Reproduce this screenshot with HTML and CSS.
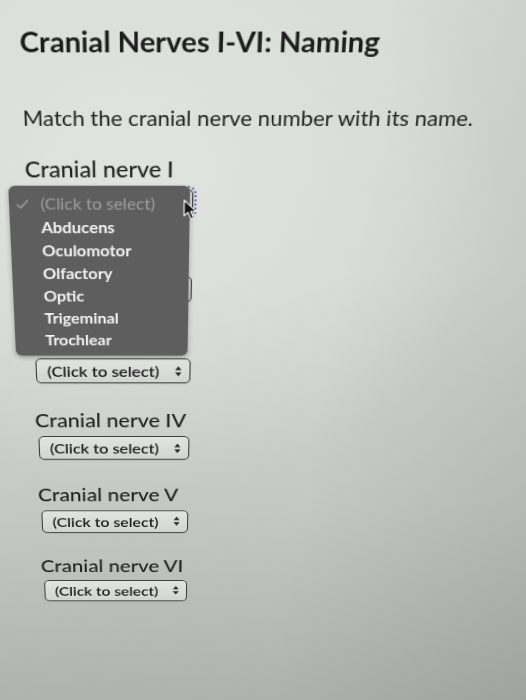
FILE: index.html
```
<!DOCTYPE html>
<html lang="en">
<head>
<meta charset="utf-8">
<title>Cranial Nerves I-VI: Naming</title>
<link rel="stylesheet" href="styles.css">
</head>
<body>
<main class="sheet">
  <h1 class="title">Cranial Nerves I-VI: Naming</h1>
  <p class="intro">Match the cranial nerve number with its name.</p>
  <div class="questions">
    <div class="q">
      <div class="label">Cranial nerve I</div>
      <div class="select focused">
        <span class="select-text">(Click to select)</span>
        <svg class="arrows" width="7" height="12" viewBox="0 0 8 14"><path d="M4 0.5 L7.5 5.5 L0.5 5.5 Z M4 13.5 L7.5 8.5 L0.5 8.5 Z" fill="#2a2a2a"/></svg>
        <ul class="menu">
          <li class="item checked"><svg class="check" width="12" height="10" viewBox="0 0 14 12"><path d="M1.5 6.5 L5 10 L12.5 1.5" fill="none" stroke="#9a9a9a" stroke-width="1.8" stroke-linecap="round" stroke-linejoin="round"/></svg>(Click to select)</li>
          <li class="item">Abducens</li>
          <li class="item">Oculomotor</li>
          <li class="item">Olfactory</li>
          <li class="item">Optic</li>
          <li class="item">Trigeminal</li>
          <li class="item">Trochlear</li>
        </ul>
        <svg class="cursor" width="13" height="21" viewBox="0 0 15 25"><path d="M1 1 L1 19 L5.2 15 L8.2 22.5 L11 21.3 L8.1 14 L13.8 14 Z" fill="#111" stroke="#fff" stroke-width="1.2" stroke-linejoin="round"/></svg>
      </div>
    </div>
    <div class="q">
      <div class="label">Cranial nerve II</div>
      <div class="select">
        <span class="select-text">(Click to select)</span>
        <svg class="arrows" width="7" height="12" viewBox="0 0 8 14"><path d="M4 0.5 L7.5 5.5 L0.5 5.5 Z M4 13.5 L7.5 8.5 L0.5 8.5 Z" fill="#2a2a2a"/></svg>
      </div>
    </div>
    <div class="q">
      <div class="label">Cranial nerve III</div>
      <div class="select">
        <span class="select-text">(Click to select)</span>
        <svg class="arrows" width="7" height="12" viewBox="0 0 8 14"><path d="M4 0.5 L7.5 5.5 L0.5 5.5 Z M4 13.5 L7.5 8.5 L0.5 8.5 Z" fill="#2a2a2a"/></svg>
      </div>
    </div>
    <div class="q">
      <div class="label">Cranial nerve IV</div>
      <div class="select">
        <span class="select-text">(Click to select)</span>
        <svg class="arrows" width="7" height="12" viewBox="0 0 8 14"><path d="M4 0.5 L7.5 5.5 L0.5 5.5 Z M4 13.5 L7.5 8.5 L0.5 8.5 Z" fill="#2a2a2a"/></svg>
      </div>
    </div>
    <div class="q">
      <div class="label">Cranial nerve V</div>
      <div class="select">
        <span class="select-text">(Click to select)</span>
        <svg class="arrows" width="7" height="12" viewBox="0 0 8 14"><path d="M4 0.5 L7.5 5.5 L0.5 5.5 Z M4 13.5 L7.5 8.5 L0.5 8.5 Z" fill="#2a2a2a"/></svg>
      </div>
    </div>
    <div class="q">
      <div class="label">Cranial nerve VI</div>
      <div class="select">
        <span class="select-text">(Click to select)</span>
        <svg class="arrows" width="7" height="12" viewBox="0 0 8 14"><path d="M4 0.5 L7.5 5.5 L0.5 5.5 Z M4 13.5 L7.5 8.5 L0.5 8.5 Z" fill="#2a2a2a"/></svg>
      </div>
    </div>
  </div>
</main>
</body>
</html>
```
FILE: styles.css
```
html {
  overflow: hidden;
  height: 100%;
}
body {
  margin: 0;
  height: 100%;
  overflow: hidden;
  font-family: Lato, "Open Sans", "Liberation Sans", sans-serif;
  color: #1f201f;
  background:
    radial-gradient(ellipse 70% 45% at 25% 25%, rgba(226, 229, 226, 0.9) 0%, rgba(226, 229, 226, 0) 100%),
    linear-gradient(100deg, rgba(0, 0, 0, 0) 60%, rgba(60, 62, 60, 0.12) 100%),
    linear-gradient(178deg, #d8dbd8 0%, #d4d7d4 40%, #c4c7c3 72%, #aeb0ac 100%);
}
.sheet {
  box-sizing: border-box;
  width: 450px;
  padding: 20.8px 0 0 39.3px;
  transform-origin: 146px 0;
  transform: perspective(558px) rotateX(-10deg) scale(1.2);
}
.title {
  margin: 0;
  font-size: 24.7px;
  line-height: 30px;
  font-weight: 700;
  color: #1c1c1c;
  white-space: nowrap;
}
.intro {
  margin: 40px 0 0;
  font-size: 19.2px;
  line-height: 25px;
  font-weight: 400;
  white-space: nowrap;
}
.questions {
  margin-top: 23.7px;
  display: flex;
  flex-direction: column;
  gap: 29px;
}
.q {
  display: flex;
  flex-direction: column;
  align-items: flex-start;
}
.label {
  font-size: 20.7px;
  line-height: 25px;
  font-weight: 500;
}
.select {
  position: relative;
  box-sizing: border-box;
  margin: 5.25px 0 0 2.5px;
  width: 146px;
  height: 27px;
  padding: 0 6.5px 0 10px;
  display: flex;
  align-items: center;
  justify-content: space-between;
  border: 1.7px solid #383938;
  border-radius: 5px;
  background: linear-gradient(#e2e4e2, #d3d5d3);
  box-shadow: 0 1px 1px rgba(0, 0, 0, 0.15);
  font-size: 15.8px;
  font-weight: 600;
  color: #1a1a1a;
}
.select-text {
  white-space: nowrap;
}
.arrows {
  flex: none;
}
.focused {
  outline: 2.5px dotted #6675a8;
  outline-offset: 1px;
}
.menu {
  position: absolute;
  top: -4px;
  left: -19.2px;
  width: 161.7px;
  margin: 0;
  padding: 6.7px 0 4.2px;
  list-style: none;
  background: #5d5e5d;
  border-radius: 6px;
  box-shadow: 0 2px 5px rgba(0, 0, 0, 0.3);
  z-index: 2;
}
.item {
  position: relative;
  height: 23px;
  line-height: 23px;
  padding-left: 28.3px;
  font-size: 15px;
  font-weight: 700;
  color: #f3f3f3;
  white-space: nowrap;
}
.item.checked {
  color: #9d9e9d;
  font-weight: 400;
  font-size: 15.4px;
}
.check {
  position: absolute;
  left: 6.7px;
  top: 6.7px;
}
.cursor {
  position: absolute;
  left: 135.8px;
  top: 9px;
  z-index: 3;
}
```
